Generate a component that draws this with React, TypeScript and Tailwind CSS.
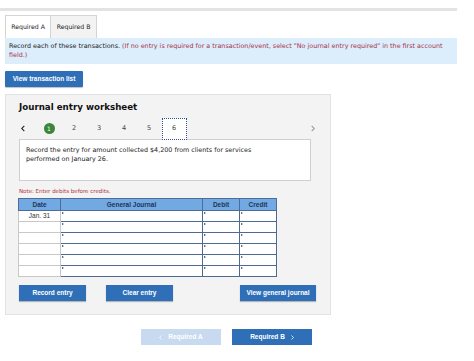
const rows = ["Jan. 31", "", "", "", "", ""]

function Btn({ label, className }: { label: string; className: string }) {
    return (
        <button className={`h-[16px] bg-[#2f6fb7] text-white font-bold text-[6.5px] font-['Liberation_Sans',sans-serif] shadow-[0_1px_1px_rgba(0,0,0,0.25)] ${className}`}>
            {label}
        </button>
    )
}

function Chevron({ dir, className }: { dir: "left" | "right"; className: string }) {
    return (
        <svg viewBox="0 0 6 10" className={className} fill="none" stroke="currentColor" strokeWidth="1.6">
            <path d={dir === "left" ? "M5 1 L1 5 L5 9" : "M1 1 L5 5 L1 9"} />
        </svg>
    )
}

function Cell({ w }: { w: string }) {
    return (
        <td className={`relative h-[11px] ${w} border border-[#4c6a92] border-b-[1.5px] bg-white p-0`}>
            <span className="absolute left-[1px] top-[1px] w-0 h-0 border-y-[1.5px] border-y-transparent border-l-[2px] border-l-[#2a3f5f]" />
        </td>
    )
}

export default function App() {
    return (
        <div className="w-[474px] h-[361px] bg-white font-['DejaVu_Sans',sans-serif] text-[#222]">
            <div className="pt-[8px]">
                <div className="h-[3px] w-[457px] bg-[#e3e3e3]" />
            </div>
            <div className="pl-[5px] w-[457px]">
                <div className="flex mt-[4px] h-[23px] text-[6.2px]">
                    <div className="w-[46px] bg-white border border-b-0 border-[#d4d4d4] flex items-center justify-center">Required A</div>
                    <div className="w-[46px] bg-[#f3f3f3] border border-l-0 border-b-0 border-[#d4d4d4] flex items-center justify-center">Required B</div>
                </div>
                <div className="h-[26px] bg-[#dcedfb] px-[4px] pt-[4px] text-[6.4px] leading-[9px]">
                    <p>
                        Record each of these transactions. <span className="text-[#a8334a]">(If no entry is required for a transaction/event, select "No journal entry required" in the first account</span>
                    </p>
                    <p className="text-[#a8334a]">field.)</p>
                </div>
                <Btn label="View transaction list" className="mt-[7px] w-[78px] h-[15px] rounded-[1px]" />
                <div className="mt-[6px] w-[326px] h-[221px] bg-[#f3f3f3] border border-[#e2e2e2] pl-[13px] pr-[19px] pt-[6px]">
                    <h2 className="text-[8.7px] font-bold leading-[12px] text-[#111]">Journal entry worksheet</h2>
                    <div className="flex items-center h-[21px] mt-[5px] text-[6.5px]">
                        <span className="w-[17.5px] pl-[2px] text-[#222]">
                            <Chevron dir="left" className="w-[4px] h-[7px]" />
                        </span>
                        <span className="w-[25px] flex justify-center">
                            <span className="w-[11px] h-[11px] rounded-full bg-[#3b873a] text-white text-[6px] flex items-center justify-center">1</span>
                        </span>
                        {["2", "3", "4", "5"].map(n => (
                            <span key={n} className="w-[25px] text-center text-[#444]">{n}</span>
                        ))}
                        <span className="relative z-10 w-[25px] h-[22px] mt-[1px] bg-white border border-dotted border-[#2d4f8a] flex items-center justify-center text-[#444]">6</span>
                        <span className="ml-auto mr-[-4px] text-[#999]">
                            <Chevron dir="right" className="w-[4px] h-[7px]" />
                        </span>
                    </div>
                    <div className="h-[42px] bg-white border border-[#cfcfcf] pl-[6px] pt-[6px] text-[6.4px] leading-[8.5px]">
                        Record the entry for amount collected $4,200 from clients for services<br />performed on January 26.
                    </div>
                    <p className="mt-[6px] text-[5.5px] text-[#b0323f] leading-[8px]">Note: Enter debits before credits.</p>
                    <table className="mt-[3px] ml-[-1px] border-collapse font-['Liberation_Sans',sans-serif]">
                        <thead>
                            <tr className="h-[12px] bg-[#72a9e2] text-[#1e3558] text-[6.5px] font-bold">
                                <th className="w-[42px] border border-[#4d6d96] font-bold">Date</th>
                                <th className="w-[142px] border border-[#4d6d96] font-bold">General Journal</th>
                                <th className="w-[37px] border border-[#4d6d96] font-bold">Debit</th>
                                <th className="w-[37px] border border-[#4d6d96] font-bold">Credit</th>
                            </tr>
                        </thead>
                        <tbody>
                            {rows.map((d, i) => (
                                <tr key={i} className="h-[11px]">
                                    <td className="w-[42px] border border-[#c8c8c8] bg-white text-center text-[6.5px] text-[#333] p-0">{d}</td>
                                    <Cell w="w-[142px]" />
                                    <Cell w="w-[37px]" />
                                    <Cell w="w-[37px]" />
                                </tr>
                            ))}
                        </tbody>
                    </table>
                    <div className="flex mt-[8px]">
                        <Btn label="Record entry" className="w-[67px]" />
                        <Btn label="Clear entry" className="ml-[20px] w-[67px]" />
                        <Btn label="View general journal" className="ml-auto mr-[-5px] w-[76px]" />
                    </div>
                </div>
            </div>
            <div className="flex mt-[14px] pl-[141px] gap-[11px]">
                <button className="w-[80px] h-[16px] bg-[#c7daf0] text-white text-[6.5px] font-bold font-['Liberation_Sans',sans-serif] flex items-center justify-center gap-[6px]">
                    <Chevron dir="left" className="w-[3px] h-[5px]" />Required A
                </button>
                <button className="w-[80px] h-[16px] bg-[#2f6fb7] text-white text-[6.5px] font-bold font-['Liberation_Sans',sans-serif] flex items-center justify-center gap-[6px]">
                    Required B<Chevron dir="right" className="w-[3px] h-[5px]" />
                </button>
            </div>
        </div>
    )
}
